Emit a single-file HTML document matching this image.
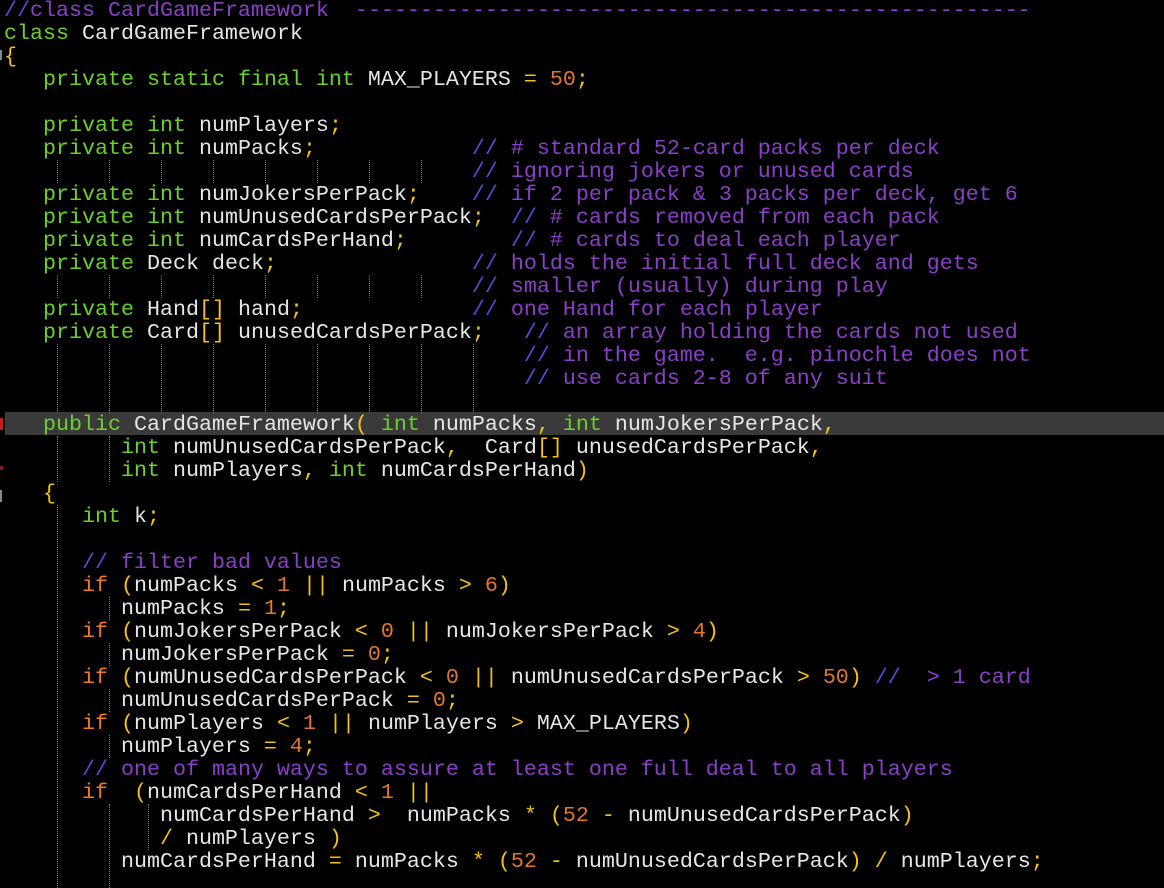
<!DOCTYPE html>
<html><head><meta charset="utf-8"><style>
html,body{margin:0;padding:0;background:#000;width:1164px;height:888px;overflow:hidden}
pre{position:absolute;left:4px;top:-1px;margin:0;font-family:"Liberation Mono",monospace;font-size:21.67px;line-height:23px;color:#e6e6e6;z-index:2}
.k{color:#6ad12a}.c{color:#8a3fc8}.s{color:#5a4ad8}.n{color:#e0782c}.o{color:#f5c211}.f{color:#f07a1a}
.hl{position:absolute;left:5px;top:412px;width:1159px;height:23px;background:#3a3a3a;z-index:1}
.g{position:absolute;width:0;border-left:1px dotted #777;z-index:1}
.m{position:absolute;left:0;width:3px;background:#c02020}
</style></head><body>
<div class="hl"></div>
<div class="m" style="top:418px;height:12px"></div>
<div class="m" style="top:466px;height:4px;background:#802020"></div>
<div class="m" style="top:490px;height:12px;background:#888;width:2px"></div>
<div class="m" style="top:50px;height:10px;background:#888;width:2px"></div>
<div class="g" style="left:57px;top:160px;height:23px"></div>
<div class="g" style="left:109px;top:160px;height:23px"></div>
<div class="g" style="left:161px;top:160px;height:23px"></div>
<div class="g" style="left:213px;top:160px;height:23px"></div>
<div class="g" style="left:265px;top:160px;height:23px"></div>
<div class="g" style="left:317px;top:160px;height:23px"></div>
<div class="g" style="left:369px;top:160px;height:23px"></div>
<div class="g" style="left:421px;top:160px;height:23px"></div>
<div class="g" style="left:57px;top:275px;height:23px"></div>
<div class="g" style="left:109px;top:275px;height:23px"></div>
<div class="g" style="left:161px;top:275px;height:23px"></div>
<div class="g" style="left:213px;top:275px;height:23px"></div>
<div class="g" style="left:265px;top:275px;height:23px"></div>
<div class="g" style="left:317px;top:275px;height:23px"></div>
<div class="g" style="left:369px;top:275px;height:23px"></div>
<div class="g" style="left:421px;top:275px;height:23px"></div>
<div class="g" style="left:57px;top:344px;height:69px"></div>
<div class="g" style="left:109px;top:344px;height:69px"></div>
<div class="g" style="left:161px;top:344px;height:69px"></div>
<div class="g" style="left:213px;top:344px;height:69px"></div>
<div class="g" style="left:265px;top:344px;height:69px"></div>
<div class="g" style="left:317px;top:344px;height:69px"></div>
<div class="g" style="left:369px;top:344px;height:69px"></div>
<div class="g" style="left:421px;top:344px;height:69px"></div>
<div class="g" style="left:473px;top:344px;height:69px"></div>
<div class="g" style="left:57px;top:436px;height:46px"></div>
<div class="g" style="left:109px;top:436px;height:46px"></div>
<div class="g" style="left:57px;top:505px;height:383px"></div>
<div class="g" style="left:109px;top:597px;height:23px"></div>
<div class="g" style="left:109px;top:643px;height:23px"></div>
<div class="g" style="left:109px;top:689px;height:23px"></div>
<div class="g" style="left:109px;top:735px;height:23px"></div>
<div class="g" style="left:109px;top:804px;height:84px"></div>
<div class="g" style="left:148px;top:804px;height:46px"></div>
<pre><span class="s">//</span><span class="c">class CardGameFramework  ----------------------------------------------------</span>
<span class="k">class</span> CardGameFramework
<span class="o">{</span>
   <span class="k">private static final int</span> MAX_PLAYERS <span class="o">=</span> <span class="n">50</span><span class="o">;</span>

   <span class="k">private int</span> numPlayers<span class="o">;</span>
   <span class="k">private int</span> numPacks<span class="o">;</span>            <span class="s">//</span><span class="c"> # standard 52-card packs per deck</span>
                                    <span class="s">//</span><span class="c"> ignoring jokers or unused cards</span>
   <span class="k">private int</span> numJokersPerPack<span class="o">;</span>    <span class="s">//</span><span class="c"> if 2 per pack &amp; 3 packs per deck, get 6</span>
   <span class="k">private int</span> numUnusedCardsPerPack<span class="o">;</span>  <span class="s">//</span><span class="c"> # cards removed from each pack</span>
   <span class="k">private int</span> numCardsPerHand<span class="o">;</span>        <span class="s">//</span><span class="c"> # cards to deal each player</span>
   <span class="k">private</span> Deck deck<span class="o">;</span>               <span class="s">//</span><span class="c"> holds the initial full deck and gets</span>
                                    <span class="s">//</span><span class="c"> smaller (usually) during play</span>
   <span class="k">private</span> Hand<span class="o">[]</span> hand<span class="o">;</span>             <span class="s">//</span><span class="c"> one Hand for each player</span>
   <span class="k">private</span> Card<span class="o">[]</span> unusedCardsPerPack<span class="o">;</span>   <span class="s">//</span><span class="c"> an array holding the cards not used</span>
                                        <span class="s">//</span><span class="c"> in the game.  e.g. pinochle does not</span>
                                        <span class="s">//</span><span class="c"> use cards 2-8 of any suit</span>

   <span class="k">public</span> CardGameFramework<span class="o">(</span> <span class="k">int</span> numPacks<span class="o">,</span> <span class="k">int</span> numJokersPerPack<span class="o">,</span>
         <span class="k">int</span> numUnusedCardsPerPack<span class="o">,</span>  Card<span class="o">[]</span> unusedCardsPerPack<span class="o">,</span>
         <span class="k">int</span> numPlayers<span class="o">,</span> <span class="k">int</span> numCardsPerHand<span class="o">)</span>
   <span class="o">{</span>
      <span class="k">int</span> k<span class="o">;</span>

      <span class="s">//</span><span class="c"> filter bad values</span>
      <span class="f">if</span> <span class="o">(</span>numPacks <span class="o">&lt;</span> <span class="n">1</span> <span class="o">||</span> numPacks <span class="o">&gt;</span> <span class="n">6</span><span class="o">)</span>
         numPacks <span class="o">=</span> <span class="n">1</span><span class="o">;</span>
      <span class="f">if</span> <span class="o">(</span>numJokersPerPack <span class="o">&lt;</span> <span class="n">0</span> <span class="o">||</span> numJokersPerPack <span class="o">&gt;</span> <span class="n">4</span><span class="o">)</span>
         numJokersPerPack <span class="o">=</span> <span class="n">0</span><span class="o">;</span>
      <span class="f">if</span> <span class="o">(</span>numUnusedCardsPerPack <span class="o">&lt;</span> <span class="n">0</span> <span class="o">||</span> numUnusedCardsPerPack <span class="o">&gt;</span> <span class="n">50</span><span class="o">)</span> <span class="s">//</span><span class="c">  &gt; 1 card</span>
         numUnusedCardsPerPack <span class="o">=</span> <span class="n">0</span><span class="o">;</span>
      <span class="f">if</span> <span class="o">(</span>numPlayers <span class="o">&lt;</span> <span class="n">1</span> <span class="o">||</span> numPlayers <span class="o">&gt;</span> MAX_PLAYERS<span class="o">)</span>
         numPlayers <span class="o">=</span> <span class="n">4</span><span class="o">;</span>
      <span class="s">//</span><span class="c"> one of many ways to assure at least one full deal to all players</span>
      <span class="f">if</span>  <span class="o">(</span>numCardsPerHand <span class="o">&lt;</span> <span class="n">1</span> <span class="o">||</span>
            numCardsPerHand <span class="o">&gt;</span>  numPacks <span class="o">*</span> <span class="o">(</span><span class="n">52</span> <span class="o">-</span> numUnusedCardsPerPack<span class="o">)</span>
            <span class="o">/</span> numPlayers <span class="o">)</span>
         numCardsPerHand <span class="o">=</span> numPacks <span class="o">*</span> <span class="o">(</span><span class="n">52</span> <span class="o">-</span> numUnusedCardsPerPack<span class="o">)</span> <span class="o">/</span> numPlayers<span class="o">;</span>
</pre>
</body></html>
